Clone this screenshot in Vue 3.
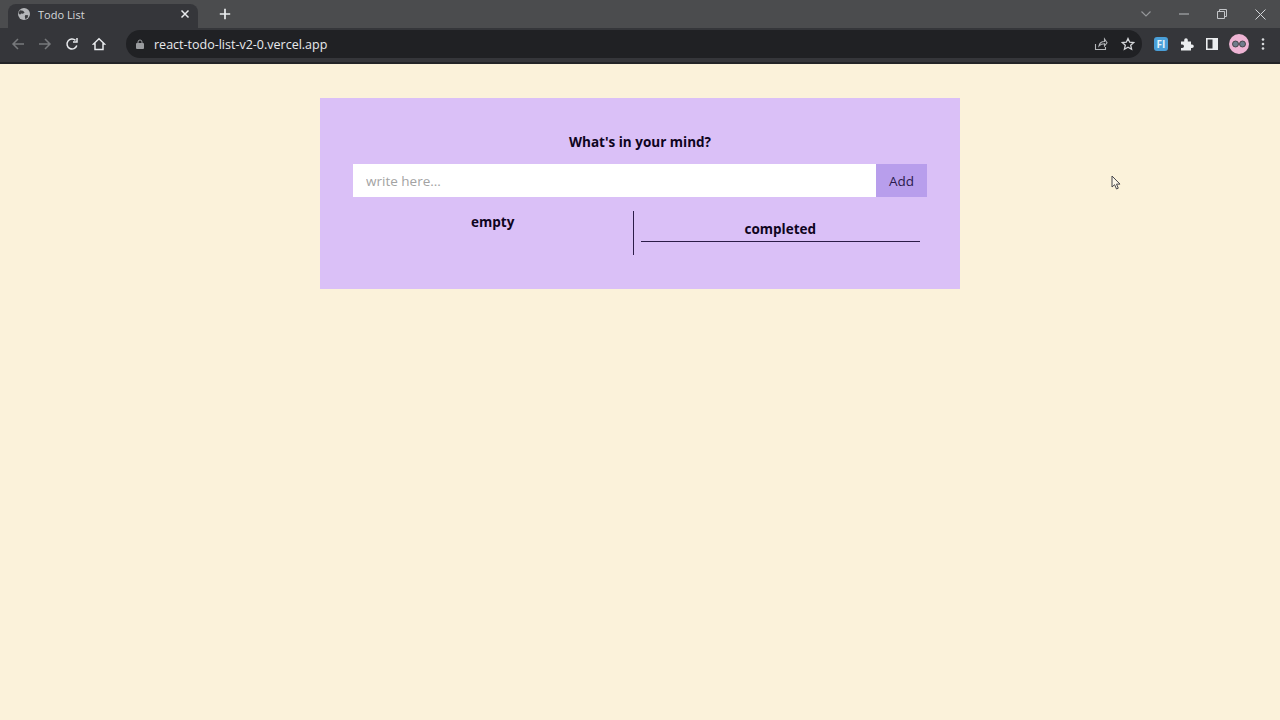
<script setup>
const title = "What's in your mind?"
</script>

<template>
  <div class="window">
    <header class="tabstrip">
      <div class="tab">
        <svg class="globe" width="14" height="14" viewBox="0 0 14 14">
          <circle cx="7" cy="7" r="6" fill="#b4b6b9" />
          <path d="M3 3.2l3 .6 1.6 1.6-1.6 1.4-1.8-.4-1.2 1.4L1.4 6zM8.4 8l2.8.2-.6 2.6-2.2 1.4-.6-2.6z" fill="#3a3b3e" />
        </svg>
        <span class="tab-title">Todo List</span>
        <svg class="tab-close" width="10" height="10" viewBox="0 0 10 10">
          <path d="M1.5 1.5l7 7M8.5 1.5l-7 7" stroke="#e8eaed" stroke-width="1.5" />
        </svg>
      </div>
      <svg class="new-tab" width="12" height="12" viewBox="0 0 12 12">
        <path d="M6 .8v10.4M.8 6h10.4" stroke="#eceef0" stroke-width="1.7" />
      </svg>
      <div class="win-controls">
        <svg width="12" height="8" viewBox="0 0 12 8"><path d="M1.5 1.5L6 6l4.500-4.500" fill="none" stroke="#96989b" stroke-width="1.100" /></svg>
        <svg class="gap-min" width="10" height="2" viewBox="0 0 10 2"><path d="M0 1h10" stroke="#b9bbbe" stroke-width="1" /></svg>
        <svg class="gap-max" width="10" height="10" viewBox="0 0 10 10"><path d="M.5 2.500h7v7h-7zM2.500 2.500v-2h7v7h-2" fill="none" stroke="#c3c5c8" stroke-width="1" /></svg>
        <svg class="gap-x" width="11" height="11" viewBox="0 0 11 11"><path d="M.5.5l10 10M10.500.5l-10 10" stroke="#d3d5d8" stroke-width="1" /></svg>
      </div>
    </header>

    <nav class="toolbar">
      <svg class="nav" width="14" height="14" viewBox="0 0 14 14"><path d="M13 7H2M7 2L2 7l5 5" fill="none" stroke="#77797c" stroke-width="1.500" /></svg>
      <svg class="nav" width="14" height="14" viewBox="0 0 14 14"><path d="M1 7h11M7 2l5 5-5 5" fill="none" stroke="#77797c" stroke-width="1.500" /></svg>
      <svg class="nav" width="14" height="14" viewBox="0 0 14 14"><path d="M11.800 8.500A5 5 0 1 1 10.500 3.400M12 1v4H8" fill="none" stroke="#e8eaed" stroke-width="1.500" /></svg>
      <svg class="nav" width="14" height="14" viewBox="0 0 14 14"><path d="M7 1.800L1.500 7H3v5.500h8V7h1.500z" fill="none" stroke="#e8eaed" stroke-width="1.500" /></svg>
      <div class="omnibox">
        <svg width="8" height="10" viewBox="0 0 8 10"><path d="M2 4V3a2 2 0 0 1 4 0v1" fill="none" stroke="#9a9c9f" /><rect y="4" width="8" height="6" rx="1" fill="#9a9c9f" /></svg>
        <span class="url">react-todo-list-v2-0.vercel.app</span>
        <span class="spacer"></span>
        <svg width="14" height="14" viewBox="0 0 14 14"><path d="M1.500 7v5.500h10V10M5 9c.5-3 3-4.500 5.500-4.500V2L13 5.800 10.500 9V6.800C8 6.800 6.300 7.500 5 9z" fill="none" stroke="#b5b7ba" stroke-width="1.100" /></svg>
        <svg class="star" width="14" height="14" viewBox="0 0 14 14"><path d="M7 1.500l1.700 3.700 4 .4-3 2.700.9 4L7 10.300 3.400 12.300l.9-4-3-2.700 4-.4z" fill="none" stroke="#d5d7da" stroke-width="1.300" /></svg>
      </div>
      <div class="ext">
        <span class="fi">FI</span>
        <svg width="14" height="14" viewBox="0 0 14 14"><path d="M1 4.500h3.200V3a1.800 1.800 0 0 1 3.600 0v1.500H11v3h1a1.800 1.800 0 0 1 0 3.600h-1v2.400H1V11h1.200a1.800 1.800 0 0 0 0-3.600H1z" fill="#eceef0" /></svg>
        <svg width="12" height="12" viewBox="0 0 12 12"><path d="M.8.800h10.400v10.400H.8z" fill="none" stroke="#eceef0" stroke-width="1.600" /><rect x="6.500" y="1" width="5" height="10" fill="#eceef0" /></svg>
        <svg width="20" height="20" viewBox="0 0 20 20">
          <circle cx="10" cy="10" r="10" fill="#eeb4d4" />
          <circle cx="6.500" cy="10" r="3" fill="#6f7c8c" stroke="#333" stroke-width=".8" />
          <circle cx="13.500" cy="10" r="3" fill="#6f7c8c" stroke="#333" stroke-width=".8" />
        </svg>
        <svg width="4" height="12" viewBox="0 0 4 12"><circle cx="2" cy="1.500" r="1.300" fill="#d8dadd" /><circle cx="2" cy="6" r="1.300" fill="#d8dadd" /><circle cx="2" cy="10.500" r="1.300" fill="#d8dadd" /></svg>
      </div>
    </nav>

    <main class="page">
      <section class="card">
        <h1 class="heading">{{ title }}</h1>
        <form class="entry" @submit.prevent>
          <input class="field" type="text" placeholder="write here..." />
          <button class="add" type="submit">Add</button>
        </form>
        <div class="lists">
          <div class="col col-left">
            <h2 class="col-title">empty</h2>
          </div>
          <div class="col col-right">
            <h2 class="col-title done">completed</h2>
            <hr class="rule" />
          </div>
        </div>
      </section>
      <svg class="cursor" width="10" height="15" viewBox="0 0 10 15">
        <path d="M1 1v11l2.600-2.300L5.500 14l1.800-.8-1.800-4.100H9z" fill="#fbf6e8" stroke="#45454a" stroke-width="1" />
      </svg>
    </main>
  </div>
</template>

<style scoped>
.window {
  width: 1280px;
  height: 720px;
  display: flex;
  flex-direction: column;
  overflow: hidden;
  font-family: "Open Sans", "Noto Sans", sans-serif;
}
.tabstrip {
  height: 28px;
  flex: none;
  display: flex;
  align-items: center;
  background: #4b4c4e;
}
.tab {
  width: 190px;
  height: 24px;
  margin: 4px 0 0 8px;
  padding: 0 8px 4px 9px;
  box-sizing: border-box;
  display: flex;
  align-items: center;
  background: #35363a;
  border-radius: 8px 8px 0 0;
}
.globe { flex: none; }
.tab-title {
  margin-left: 7px;
  flex: 1;
  font-size: 11px;
  color: #d6d8da;
}
.new-tab { margin-left: 21px; }
.win-controls {
  margin-left: auto;
  margin-right: 14px;
  display: flex;
  align-items: center;
}
.gap-min { margin-left: 27px; }
.gap-max { margin-left: 28px; }
.gap-x { margin-left: 28px; }
.toolbar {
  height: 36px;
  flex: none;
  box-sizing: border-box;
  display: flex;
  align-items: center;
  padding: 0 15px 2px 11px;
  background: #35363a;
  border-bottom: 2px solid #232427;
}
.nav { margin-right: 13px; }
.omnibox {
  margin-left: 7px;
  width: 1016px;
  height: 28px;
  box-sizing: border-box;
  display: flex;
  align-items: center;
  padding: 0 7px 0 10px;
  border-radius: 14px;
  background: #202124;
}
.url {
  margin-left: 10px;
  font-size: 12.500px;
  color: #e8eaed;
}
.spacer { flex: 1; }
.star { margin-left: 13px; }
.ext {
  margin-left: 12px;
  flex: 1;
  display: flex;
  align-items: center;
  justify-content: space-between;
}
.fi {
  width: 14px;
  height: 14px;
  border-radius: 3px;
  background: #4a9fd8;
  color: #e6f3fb;
  font-size: 10px;
  font-weight: 700;
  line-height: 14px;
  text-align: center;
}
.page {
  flex: 1;
  position: relative;
  background: #fbf2da;
  padding-top: 34px;
}
.card {
  width: 640px;
  height: 191px;
  margin: 0 auto;
  box-sizing: border-box;
  padding: 33px 33px 0;
  background: #dac0f7;
  color: #0e0420;
}
.heading {
  margin: 0;
  height: 22px;
  font-size: 13.500px;
  font-weight: 700;
  line-height: 22px;
  text-align: center;
}
.entry {
  margin: 11px 0 0;
  height: 33px;
  display: flex;
}
.field {
  flex: 1;
  min-width: 0;
  box-sizing: border-box;
  padding: 0 13px;
  border: 0;
  outline: 0;
  background: #fff;
  font: inherit;
  font-size: 13.500px;
}
.field::placeholder { color: #a3a3a3; }
.add {
  width: 51px;
  border: 0;
  padding: 0;
  background: #b89eec;
  color: #2a1a4c;
  font: inherit;
  font-size: 13.500px;
}
.lists {
  margin-top: 14px;
  height: 44px;
  display: flex;
}
.col {
  flex: 1;
  box-sizing: border-box;
}
.col-left { border-right: 1px solid #2c1c48; }
.col-right { padding: 0 7px; }
.col-title {
  margin: 0;
  height: 22px;
  font-size: 13.500px;
  font-weight: 700;
  line-height: 22px;
  text-align: center;
}
.done { margin-top: 7px; }
.rule {
  margin: 1px 0 0;
  border: 0;
  height: 1px;
  background: #2c1c48;
}
.cursor {
  position: absolute;
  left: 1111px;
  top: 111px;
}
</style>

<style>
body { background: #fbf2da; }
</style>
